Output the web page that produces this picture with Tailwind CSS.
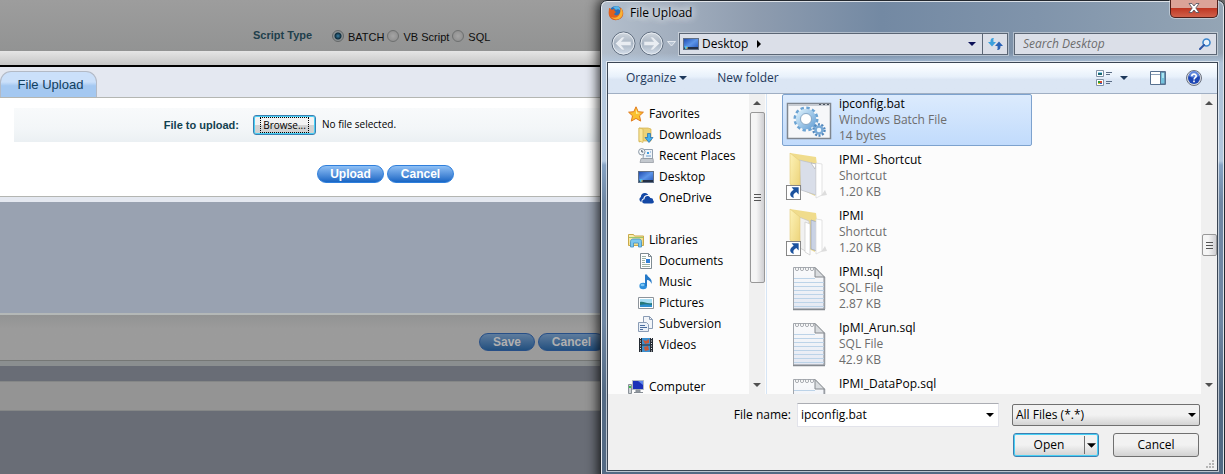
<!DOCTYPE html>
<html lang="en">
<head>
  <meta charset="UTF-8">
  <title>File Upload</title>
  <meta name="viewport" content="width=device-width, initial-scale=1.0">
  <script src="https://cdn.jsdelivr.net/npm/@tailwindcss/browser@4"></script>
</head>
<body class="relative min-h-screen overflow-hidden bg-[#696d76] font-['Liberation_Sans',Arial,sans-serif] text-xs text-black">

  <!-- shared icons -->
  <svg class="absolute size-0">
    <defs>
      <linearGradient id="gFolder" x1="0" y1="0" x2="1" y2="1">
        <stop offset="0" stop-color="#fdf3b8"/><stop offset="1" stop-color="#ecd277"/>
      </linearGradient>
      <linearGradient id="gPaper" x1="0" y1="0" x2="0" y2="1">
        <stop offset="0" stop-color="#fafbfc"/><stop offset="1" stop-color="#e4e8f2"/>
      </linearGradient>
      <linearGradient id="gBlue" x1="0" y1="0" x2="1" y2="1">
        <stop offset="0" stop-color="#1c48ae"/><stop offset=".5" stop-color="#5c95e8"/><stop offset="1" stop-color="#1d4fb8"/>
      </linearGradient>
      <linearGradient id="gGear" x1="0" y1="0" x2="1" y2="1">
        <stop offset="0" stop-color="#d5ecfa"/><stop offset="1" stop-color="#6fa6d8"/>
      </linearGradient>
      <linearGradient id="gCircle" x1="0" y1="0" x2="0" y2="1">
        <stop offset="0" stop-color="#d3d9e0"/><stop offset=".5" stop-color="#a9b5c3"/><stop offset="1" stop-color="#d5dfeb"/>
      </linearGradient>
    </defs>
    <symbol id="desktop" viewBox="0 0 16 14">
      <rect x=".5" y="1.5" width="15" height="11" fill="url(#gBlue)" stroke="#5f6f86"/>
      <rect x="1" y="10" width="14" height="2" fill="#222f45"/>
      <circle cx="3" cy="10.500" r="1.500" fill="#4cc3f0"/><circle cx="4" cy="11" r=".8" fill="#f4a52a"/>
    </symbol>
    <symbol id="down" viewBox="0 0 8 4"><path d="M0 0h8L4 4z" fill="currentColor"/></symbol>
    <symbol id="up" viewBox="0 0 8 4"><path d="M0 4h8L4 0z" fill="currentColor"/></symbol>
    <symbol id="notepad" viewBox="0 0 48 48">
      <path d="M8.500 3.500H30l9 9.500v32H8.500z" fill="url(#gPaper)" stroke="#a2a6ac"/>
      <path d="M8 45.500h32" stroke="#858a90" stroke-width="1.500"/>
      <path d="M39.500 13v32" stroke="#9a9ea4" stroke-width="1.500"/>
      <path d="M9 14.500h21M9 18.500h30M9 22.500h30M9 26.500h30M9 30.500h30M9 34.500h30M9 38.500h30M9 42.500h30" stroke="#bcd3e8"/>
      <path d="M30 3.500V13h9.500z" fill="#d9dcdf" stroke="#85898e"/>
      <g fill="#fff" stroke="#a9adb2"><circle cx="12" cy="5" r="1.600"/><circle cx="17" cy="5" r="1.600"/><circle cx="22" cy="5" r="1.600"/><circle cx="27" cy="5" r="1.600"/></g>
    </symbol>
    <symbol id="shortcut" viewBox="0 0 16 16">
      <rect x=".5" y=".5" width="15" height="15" fill="#fff" stroke="#808080"/>
      <path d="M6 2.500h7.500V10L11 7.500C8 9 7 11 8.500 13.500 4 13 2.500 8.500 8.200 5z" fill="#1b529e"/>
    </symbol>
  </svg>

  <!-- page behind the dialog -->
  <main class="flex flex-col">
    <div role="radiogroup" aria-label="Script Type" class="flex h-[51px] items-center bg-linear-to-b from-[#9d9d9d] to-[#929393] pt-5 pl-[253px] text-[11px] text-[#0d0d0d]">
      <span class="w-[79px] font-bold text-[#213f4c]">Script Type</span>
      <input id="batch" type="radio" name="type" checked class="size-3 appearance-none rounded-full border border-[#646768] bg-[#939494] checked:bg-[radial-gradient(circle,#3c7fa3_0,#0e2c3c_3px,#8b9092_4px)]">
      <label for="batch" class="pt-1 pr-[3px] pl-1">BATCH</label>
      <input id="vb" type="radio" name="type" class="size-3 appearance-none rounded-full border border-[#6e7070] bg-[radial-gradient(circle,#a5a5a5,#898989)]">
      <label for="vb" class="pt-1 pr-[3px] pl-1">VB Script</label>
      <input id="sql" type="radio" name="type" class="size-3 appearance-none rounded-full border border-[#6e7070] bg-[radial-gradient(circle,#a5a5a5,#898989)]">
      <label for="sql" class="pt-1 pl-1">SQL</label>
    </div>

    <section>
      <div class="h-4 border-b-2 border-black bg-linear-to-b from-[#e5e5e5] to-[#c6c6c6]"></div>
      <div class="flex h-[31px] items-end border-b border-[#b4b6b2] bg-[#e4e8f1]">
        <h2 class="flex h-[26px] w-[97px] items-center justify-center rounded-t-[11px] border border-b-0 border-[#b3bac6] bg-linear-to-b from-[#cbe0fa] from-40% to-[#a4c8f1] to-55% pl-1 text-[13px] text-[#12405f]">File Upload</h2>
      </div>
      <div class="h-[99px] border-b border-[#b4b6b2] bg-white pt-[10px]">
        <div class="ml-[14px] flex h-[34px] items-center bg-linear-to-b from-[#f8fafb] via-[#f3f6f8] via-60% to-[#ebf0f3]">
          <span class="w-[239px] pr-[14px] text-right text-[11px] font-bold text-[#12414f]">File to upload:</span>
          <button class="flex h-5 w-[63px] items-center justify-center rounded-[3px] border border-[#3c7fb1] bg-linear-to-b from-[#f2f2f2] from-50% to-[#d2d2d2] to-50% font-['Open_Sans',sans-serif] text-[10px] ring-1 ring-[#48d0f5] ring-inset">
            <span class="border border-dotted border-black px-0.5 leading-[14px]">Browse...</span>
          </button>
          <span class="ml-[6px] font-['Open_Sans',sans-serif] text-[10px]">No file selected.</span>
        </div>
        <div class="mt-[23px] ml-[317px] flex gap-[3px]">
          <button class="h-[18px] w-[67px] rounded-full border border-[#2f7fdc] bg-linear-to-b from-[#8fc0f5] to-[#1766c4] leading-4 font-bold text-white">Upload</button>
          <button class="h-[18px] w-[67px] rounded-full border border-[#2f7fdc] bg-linear-to-b from-[#8fc0f5] to-[#1766c4] leading-4 font-bold text-white">Cancel</button>
        </div>
      </div>
      <div class="h-[5px] bg-[#e4e8f0]"></div>
    </section>

    <div class="h-[111px] bg-[#99a2b1]"></div>
    <div class="flex h-12 items-center gap-[3px] border-t-2 border-b border-t-[#b4b8b7] border-b-[#757775] bg-linear-to-b from-[#929393] to-[#9b9b9b] to-30% pt-2 pl-[479px]">
      <button class="h-[18px] w-14 rounded-full border border-[#274f87] bg-linear-to-b from-[#5e7c9d] to-[#22507f] leading-4 font-bold text-[#b0b0b0]">Save</button>
      <button class="h-[18px] w-[67px] rounded-full border border-[#274f87] bg-linear-to-b from-[#5e7c9d] to-[#22507f] leading-4 font-bold text-[#b0b0b0]">Cancel</button>
    </div>
    <div class="h-[5px] bg-[#8b8f90]"></div>
    <div class="mt-[15px] h-[30px] border-y border-[#858787] bg-[#949494]"></div>
  </main>

  <!-- file picker window -->
  <div role="dialog" aria-label="File Upload" class="absolute top-0 right-0 left-[600px] rounded-t-[7px] border border-[#23282f] bg-[linear-gradient(90deg,#b4bfcc_0%,#8e9caf_25%,#7389a3_45%,#8094ab_70%,#94a5b5_100%)] px-[6px] pb-2 font-['Open_Sans',sans-serif] shadow-[0_0_12px_2px_rgba(0,0,0,.8),inset_0_0_0_1px_rgba(255,255,255,.7)]">
    <div class="absolute inset-x-px top-[52px] bottom-px bg-[linear-gradient(180deg,rgba(185,207,231,0)_0,rgba(185,207,231,.7)_10px,rgba(185,207,231,.8)_108px,#86a3c4_112px,#6f87a3_150px,#6f87a3_270px,#536a84_340px)]"></div>

    <div class="relative flex h-6 items-start justify-between">
      <div class="flex items-center gap-[6px] pt-1 pl-[1px]">
        <svg class="size-4" viewBox="0 0 16 16">
          <circle cx="8" cy="8" r="7" fill="#2b6fb8"/>
          <path d="M5 2c4-2 8 0 8 4-2-2-4-2-5-1z" fill="#55b5e8"/>
          <path d="M1 3c1 0 2 1 3 2 1-1 2-1 3-1C6 5 6 6 8 7L6 9c1 2 4 2 6-1 1-3 0-5-1-6 5 2 6 9 1 12C7 17 0 14 .7 7z" fill="#e2601b"/>
          <path d="M13 3c3 4 2 9-2 11-3 1-6 0-8-2 4 2 8 0 9-4 .6-2 .7-3 1-5z" fill="#f9b233"/>
        </svg>
        <span class="text-xs leading-4 [text-shadow:0_0_8px_#fff,0_0_8px_#fff]">File Upload</span>
      </div>
      <button aria-label="Close" class="-mt-px flex h-[18px] w-12 items-center justify-center rounded-b-[5px] border border-t-0 border-[#4d1f1b] bg-linear-to-b from-[#dba398] from-45% via-[#bf3723] via-50% to-[#d0604a] ring-1 ring-white/40">
        <svg class="mb-0.5 h-[10px] w-3" viewBox="0 0 12 10"><path d="M1 .5h3l2 2.500L8 .5h3L7.800 5 11 9.500H8L6 7 4 9.500H1L4.200 5z" fill="#fff" stroke="#4c4f5c" stroke-width=".8"/></svg>
      </button>
    </div>

    <div class="relative flex h-[37px] items-center pr-px pl-1">
      <button aria-label="Back" class="size-[25px]">
        <svg viewBox="0 0 25 25"><circle cx="12.500" cy="12.500" r="11.500" fill="url(#gCircle)" stroke="#5d6b7d"/><circle cx="12.500" cy="12.500" r="10.500" fill="none" stroke="#e6ebf1"/><path d="M4.500 12.500 11 6h3l-3.500 4.500H20v4h-9.500L14 19h-3z" fill="#e9edf2" stroke="#bac4d0" stroke-width=".6"/></svg>
      </button>
      <button aria-label="Forward" class="ml-[3px] size-[25px]">
        <svg viewBox="0 0 25 25"><circle cx="12.500" cy="12.500" r="11.500" fill="url(#gCircle)" stroke="#5d6b7d"/><circle cx="12.500" cy="12.500" r="10.500" fill="none" stroke="#e6ebf1"/><path d="M20.500 12.500 14 6h-3l3.500 4.500H5v4h9.500L11 19h3z" fill="#e9edf2" stroke="#bac4d0" stroke-width=".6"/></svg>
      </button>
      <svg class="mx-[3px] h-[6px] w-[9px]" viewBox="0 0 9 6"><path d="M.5.5h8l-4 4.500z" fill="#b9c5d3" stroke="#e3e8ee"/></svg>
      <div class="flex h-[22px] flex-1 items-center border border-[#5b6675] bg-[#dbdfe8] ring-1 ring-white/40">
        <svg class="mx-[3px] h-[14px] w-4"><use href="#desktop"/></svg>
        <span class="text-xs">Desktop</span>
        <svg class="ml-[9px] h-2 w-1" viewBox="0 0 4 8"><path d="M0 0v8l4-4z"/></svg>
        <svg class="mr-[6px] ml-auto h-1 w-2 text-[#0b1057]"><use href="#down"/></svg>
        <button aria-label="Refresh" class="flex h-full w-[25px] items-center justify-center border-l border-[#5b6675]">
          <svg class="h-3 w-[15px]" viewBox="0 0 15 12"><path d="M6 0C3 0 2.500 1.500 2.500 4H0l4 4.500L8 4H5.500C5.500 2 5 1 6 0z" fill="#3ba0dc"/><path d="M9 12c3 0 3.500-1.500 3.500-4H15l-4-4.500L7 8h2.500c0 2 .5 3-.5 4z" fill="#2a62b5"/></svg>
        </button>
      </div>
      <div class="ml-[6px] flex h-[22px] w-[203px] items-center border border-[#5b6675] bg-[#dbdfe8] ring-1 ring-white/40">
        <input type="text" aria-label="Search Desktop" placeholder="Search Desktop" class="min-w-0 flex-1 pl-2 text-xs italic outline-none placeholder:text-[#6d6d6d]">
        <svg class="mr-[5px] size-3" viewBox="0 0 12 12"><circle cx="7.500" cy="4.500" r="3.500" fill="#e8f1fa" stroke="#3c86cc" stroke-width="1.600"/><path d="m5 7-4 4" stroke="#2d55a5" stroke-width="2" stroke-linecap="round"/></svg>
      </div>
    </div>

    <div class="relative border border-[#3b4654] bg-[#f0f0f0] ring-1 ring-white/60">
      <div class="flex h-[31px] items-center border-b border-[#a0afc3] bg-linear-to-b from-[#fafdff] from-10% via-[#e8f1fb] via-45% to-[#dbe6f4] to-55% pr-[15px] pl-[18px] text-[#1e395b]">
        <button class="flex items-center gap-[3px]">Organize <svg class="h-1 w-2"><use href="#down"/></svg></button>
        <button class="ml-[30px]">New folder</button>
        <button aria-label="Change your view" class="ml-auto flex items-center gap-2">
          <svg class="size-4" viewBox="0 0 16 16"><path d="M.5.5h7v6h-7zM.5 9.500h7v6h-7z" fill="#fff" stroke="#8191a5"/><path d="M2 2h4v1H2z" fill="#8fd0f0"/><path d="M2 3h4v2H2z" fill="#1c6a72"/><path d="M2 11h2v2H2z" fill="#2b9a3a"/><path d="M4 11h2v2H4z" fill="#d24a30"/><path d="M2 13h2v1H2z" fill="#e8b820"/><path d="M4 13h2v1H4z" fill="#2a5ec0"/><path d="M10 2.500h6M10 4.500h4M10 11.500h6M10 13.500h4" stroke="#5b6d86"/></svg>
          <svg class="h-1 w-2"><use href="#down"/></svg>
        </button>
        <button aria-label="Preview pane" class="ml-[22px]">
          <svg class="size-4" viewBox="0 0 16 16"><path d="M.5 1.500h15v13H.5z" fill="#fff" stroke="#56708f"/><path d="M1 4.500h9" stroke="#8ba0b8"/><path d="M10.500 2h4.500v12h-4.500z" fill="#74c2dd" stroke="#56708f"/><path d="M12 3h2v5h-2z" fill="#a9e4f2"/></svg>
        </button>
        <button aria-label="Help" class="ml-5">
          <svg class="size-4" viewBox="0 0 16 16"><circle cx="8" cy="8" r="7.500" fill="#d6d9df" stroke="#6b7280"/><circle cx="8" cy="8" r="6" fill="#1d46b4"/><path d="M3 6a5 5 0 0 1 10 0c-3 2-7 2-10 0z" fill="#5f86dc"/><path d="M5.800 6.200C5.800 3.400 10.300 3.500 10.200 6c0 1.600-2.100 1.600-2.100 3.400M8 10.600v1.700" fill="none" stroke="#fff" stroke-width="1.600"/></svg>
        </button>
      </div>

      <div class="flex h-[300px] bg-[#fcfcfc]">
        <!-- navigation pane -->
        <nav class="flex w-[159px] overflow-hidden border-r border-[#d6e5f5]">
          <ul class="w-[141px] shrink-0 pt-[9px] leading-[21px]">
            <li><a href="#" class="flex items-center gap-[5px] pl-5">
              <svg class="size-4" viewBox="0 0 16 16"><path d="m8 .8 2.200 4.900 5.200.5-3.900 3.600 1.200 5.300L8 12.400l-4.700 2.700 1.200-5.300L.6 6.200l5.200-.5z" fill="#fbc02f" stroke="#e07a1c"/><path d="m8 3 1.200 3.500 3 .5-4.200 1z" fill="#fff0a0"/></svg>Favorites</a></li>
            <li><a href="#" class="flex items-center gap-[5px] pl-[30px]">
              <svg class="size-4" viewBox="0 0 16 16"><path d="M1 1h9l3 1v12H4L1 15z" fill="#ecd277" stroke="#d2b04c" stroke-width=".7"/><path d="M1 1l4 1v13.500L1 14z" fill="#f9e69a" stroke="#cfae4a" stroke-width=".6"/><path d="M9.500 6.500h3v4H15l-4 5-4-5h2.500z" fill="#44b0ee" stroke="#1c6bb0" stroke-width=".7"/></svg>Downloads</a></li>
            <li><a href="#" class="flex items-center gap-[5px] pl-[30px]">
              <svg class="size-4" viewBox="0 0 16 16"><path d="M6 1.500h8.500v9H5z" fill="#eef3f8" stroke="#93a0ae"/><path d="M3 10.500h12l.5 4H2z" fill="#c3c8ce" stroke="#8d949c" stroke-width=".7"/><path d="M9 4h2v2H9z" fill="#3d9be0"/><path d="M8 8h5M12 4h1" stroke="#6f9cc8"/><circle cx="3.800" cy="3.800" r="3.200" fill="#f6f9fb" stroke="#8a97a5"/><path d="M3.800 2v2h1.500" fill="none" stroke="#456"/></svg>Recent Places</a></li>
            <li><a href="#" class="flex items-center gap-[5px] pl-[30px]">
              <svg class="h-[14px] w-4"><use href="#desktop"/></svg>Desktop</a></li>
            <li><a href="#" class="flex items-center gap-[5px] pl-[30px]">
              <svg class="size-4" viewBox="0 0 16 16"><path d="M3.500 12A2.700 2.700 0 0 1 2.800 7C3 4 5.500 2.500 8 3.300c1.200.4 1.800 1 2.300 1.700C7.500 4.700 5.500 6 5.500 8.500 3.800 9 3.300 10.300 3.500 12z" fill="#1348a5"/><path d="M6.500 13.500c-3 0-3-4 0-4.200C6.500 5.500 11 5 12.300 8c2.200-.2 3 1.300 2.700 2.300 1.600 1 .8 3.200-1 3.200z" fill="#1348a5"/></svg>OneDrive</a></li>
            <li class="mt-[21px]"><a href="#" class="flex items-center gap-[5px] pl-5">
              <svg class="size-4" viewBox="0 0 16 16"><path d="M.5 2.500h5l1 1.500h9v9.500H.5z" fill="url(#gFolder)" stroke="#c9a94a"/><path d="M1 5.500h14" stroke="#9cc76b"/><path d="M2.500 15V9.500C2.500 7.800 4 7 5 7h6c1.500 0 2.500 1 2.500 2.500V15h-3v-4h-5v4z" fill="#7cc7ef" stroke="#3f8fc4" stroke-width=".8"/></svg>Libraries</a></li>
            <li><a href="#" class="flex items-center gap-[5px] pl-[30px]">
              <svg class="size-4" viewBox="0 0 16 16"><path d="M2.500.5h8l3 3v12h-11z" fill="#fff" stroke="#7f8b92"/><path d="M10.500.5v3h3" fill="none" stroke="#7f8b92"/><path d="M4 3.500h4M4 5.500h4M4 7.500h3M4 9.500h3M4 11.500h8M4 13.500h8" stroke="#9bb1a5"/><path d="M8 6h4v4H8z" fill="#2f7fd6"/></svg>Documents</a></li>
            <li><a href="#" class="flex items-center gap-[5px] pl-[30px]">
              <svg class="size-4" viewBox="0 0 16 16"><ellipse cx="5.200" cy="12" rx="3.800" ry="3.200" fill="#2e8fdc"/><path d="M7 12V.5h2c.5 3 6 4 4.500 9.500-.5-2-2-4-4.500-4V12z" fill="#2579c8"/><ellipse cx="4.500" cy="11" rx="2" ry="1.200" fill="#7cc6f4"/></svg>Music</a></li>
            <li><a href="#" class="flex items-center gap-[5px] pl-[30px]">
              <svg class="size-4" viewBox="0 0 16 16"><path d="M.5 2.500h15v11H.5z" fill="#fff" stroke="#8d949b"/><path d="M2 4h12v8H2z" fill="#a9def4"/><path d="M2 7c4-1 6 2 12 1v4H2z" fill="#27797a"/><path d="M2 10c4-1 8-1 12 0v2H2z" fill="#2f8fd0"/></svg>Pictures</a></li>
            <li><a href="#" class="flex items-center gap-[5px] pl-[30px]">
              <svg class="size-4" viewBox="0 0 16 16"><path d="M5.500.5h6l3 3v9h-9z" fill="#f2f5f9" stroke="#8a9cb5"/><path d="M11.500.5v3h3" fill="none" stroke="#8a9cb5"/><path d="M.5 6.500h8l2 2v7H.5z" fill="#e9f0f8" stroke="#8a9cb5"/><path d="M2 9.500h5M2 11.500h7M2 13.500h3" stroke="#4a6d9f"/></svg>Subversion</a></li>
            <li><a href="#" class="flex items-center gap-[5px] pl-[30px]">
              <svg class="size-4" viewBox="0 0 16 16"><path d="M1 1h14v14H1z" fill="#252b33"/><path d="M4 1h8v6.500H4zM4 8.500h8V15H4z" fill="#3c90cf"/><path d="M5 3l3 1 3-2v4L7 7zM6 10l4-1 1 4-4 1z" fill="#c9593a"/><path d="M2.500 1v14M13.500 1v14" stroke="#e6e9ec" stroke-dasharray="1 1.500"/></svg>Videos</a></li>
            <li class="mt-[21px]"><a href="#" class="flex items-center gap-[5px] pl-5">
              <svg class="size-4" viewBox="0 0 16 16"><path d="M4.500 1.500h11v9h-11z" fill="#1a30b8" stroke="#b3bac2"/><path d="M10 2h5v4z" fill="#5d86ec"/><path d="M8 11h4v2H8zM6 13.500h9" fill="#9aa1a8" stroke="#858c94"/><path d="M.5 5.500h3v9h-3z" fill="#cdd2d6" stroke="#8b9299"/><path d="M1 7h2v2H1z" fill="#37c14a"/></svg>Computer</a></li>
          </ul>
          <div class="flex w-4 flex-col items-center bg-[#f0f0f0] pt-[7px] pb-[7px]">
            <svg class="h-1 w-2 text-[#505050]"><use href="#up"/></svg>
            <div class="mt-[7px] flex h-[171px] w-[15px] flex-col items-center justify-center gap-0.5 rounded-[2px] border border-[#989898] bg-linear-to-r from-[#f5f5f5] from-40% to-[#cfcfd2]">
              <i class="h-px w-[7px] bg-[#555]"></i><i class="h-px w-[7px] bg-[#555]"></i><i class="h-px w-[7px] bg-[#555]"></i>
            </div>
            <svg class="mt-auto h-1 w-2 text-[#505050]"><use href="#down"/></svg>
          </div>
        </nav>

        <!-- file list -->
        <ul class="flex flex-1 flex-col gap-1 overflow-hidden pl-[15px] leading-4 text-[#6d6d6d]">
          <li class="flex w-[250px] shrink-0 gap-[6px] rounded-[2px] border border-[#7da2ce] bg-linear-to-b from-[#dcebfd] to-[#c1dbfc] py-px pl-[2px]">
            <svg class="size-12" viewBox="0 0 48 48">
              <path d="M2.500 7.500h43v35h-43z" fill="#f6f7f9" stroke="#7f868f" stroke-width="1.500"/>
              <path d="M3 9h42" stroke="#c6cbd2" stroke-width="2"/><path d="M34 8.500h2m2 0h2m2 0h2" stroke="#4d5763"/>
              <circle cx="21" cy="23" r="11" fill="none" stroke="#6ba3d3" stroke-width="3" stroke-dasharray="3.300 2.460"/>
              <circle cx="21" cy="23" r="7.800" fill="none" stroke="url(#gGear)" stroke-width="5"/>
              <circle cx="21" cy="23" r="5.500" fill="#fff" stroke="#7597b8" stroke-width=".8"/>
              <circle cx="34" cy="34" r="5.500" fill="none" stroke="#5288bd" stroke-width="2.500" stroke-dasharray="2 1.450"/>
              <circle cx="34" cy="34" r="3.500" fill="#eef6fc" stroke="#78a9d6" stroke-width="2.500"/>
            </svg>
            <p><span class="text-black">ipconfig.bat</span><br>Windows Batch File<br>14 bytes</p>
          </li>
          <li class="flex w-[250px] shrink-0 gap-[6px] border border-transparent py-px pl-[2px]">
            <svg class="size-12" viewBox="0 0 48 48">
              <path d="M36 44l6-1-2-5z" fill="#ddd"/>
              <path d="M5 1l26 4 1 8-2 31L5 32z" fill="#f0dc8c"/>
              <path d="M14 8l17 4v31l-15-5z" fill="#d9dee9" stroke="#b9bfcb" stroke-width=".7"/>
              <path d="M26 11l4 6 1-5z" fill="#fff" stroke="#aaa" stroke-width=".6"/>
              <path d="M31 11l6 1v31l-6 3z" fill="#fff" stroke="#d7d7d7" stroke-width=".7"/>
              <path d="M5 1l10 8v29L5 32z" fill="url(#gFolder)" stroke="#e3cb7b" stroke-width=".6"/>
              <use href="#shortcut" x="1" y="33" width="15" height="15"/>
            </svg>
            <p><span class="text-black">IPMI - Shortcut</span><br>Shortcut<br>1.20 KB</p>
          </li>
          <li class="flex w-[250px] shrink-0 gap-[6px] border border-transparent py-px pl-[2px]">
            <svg class="size-12" viewBox="0 0 48 48">
              <path d="M36 44l6-1-2-5z" fill="#ddd"/>
              <path d="M5 1l26 4 1 8-2 31L5 32z" fill="#f0dc8c"/>
              <path d="M14 9l10 4v32l-9-5z" fill="#f1f1f1" stroke="#c4c4c4" stroke-width=".7"/>
              <path d="M20 14l5 2v31l-5-3z" fill="#fff" stroke="#c9c9c9" stroke-width=".7"/>
              <path d="M26 12l6 2v29l-6-2z" fill="#c9d2e4" stroke="#9ba3b1" stroke-width=".7"/>
              <path d="M31 11l6 1v31l-6 3z" fill="#fff" stroke="#d7d7d7" stroke-width=".7"/>
              <path d="M5 1l10 8v29L5 32z" fill="url(#gFolder)" stroke="#e3cb7b" stroke-width=".6"/>
              <use href="#shortcut" x="1" y="33" width="15" height="15"/>
            </svg>
            <p><span class="text-black">IPMI</span><br>Shortcut<br>1.20 KB</p>
          </li>
          <li class="flex w-[250px] shrink-0 gap-[6px] border border-transparent py-px pl-[2px]">
            <svg class="size-12"><use href="#notepad"/></svg>
            <p><span class="text-black">IPMI.sql</span><br>SQL File<br>2.87 KB</p>
          </li>
          <li class="flex w-[250px] shrink-0 gap-[6px] border border-transparent py-px pl-[2px]">
            <svg class="size-12"><use href="#notepad"/></svg>
            <p><span class="text-black">IpMI_Arun.sql</span><br>SQL File<br>42.9 KB</p>
          </li>
          <li class="flex w-[250px] shrink-0 gap-[6px] border border-transparent py-px pl-[2px]">
            <svg class="size-12"><use href="#notepad"/></svg>
            <p><span class="text-black">IPMI_DataPop.sql</span></p>
          </li>
        </ul>
        <div class="flex w-4 flex-col items-center bg-[#f0f0f0] pt-[7px] pb-[7px]">
          <svg class="h-1 w-2 text-[#505050]"><use href="#up"/></svg>
          <div class="mt-[129px] flex h-[22px] w-[15px] flex-col items-center justify-center gap-0.5 rounded-[2px] border border-[#989898] bg-linear-to-r from-[#f5f5f5] from-40% to-[#cfcfd2]">
            <i class="h-px w-[7px] bg-[#555]"></i><i class="h-px w-[7px] bg-[#555]"></i><i class="h-px w-[7px] bg-[#555]"></i>
          </div>
          <svg class="mt-auto h-1 w-2 text-[#505050]"><use href="#down"/></svg>
        </div>
      </div>

      <!-- file name and buttons -->
      <div class="flex h-[76px] flex-col items-end gap-[6px] pt-[9px] pr-[17px]">
        <div class="flex items-center">
          <label for="filename" class="mr-[6px]">File name:</label>
          <div class="flex h-6 w-[202px] items-center border border-[#e2e3ea] border-t-[#abadb3] bg-white pr-1">
            <input id="filename" type="text" value="ipconfig.bat" class="min-w-0 flex-1 pl-[3px] outline-none">
            <button aria-label="Show file names"><svg class="h-1 w-2"><use href="#down"/></svg></button>
          </div>
          <div class="relative ml-[13px]">
            <select aria-label="File type" class="h-[22px] w-[188px] appearance-none rounded-[2px] border border-[#707070] bg-linear-to-b from-[#f2f2f2] from-50% to-[#d3d3d3] pl-[3px] leading-5">
              <option>All Files (*.*)</option>
            </select>
            <svg class="pointer-events-none absolute top-[9px] right-1 h-1 w-2"><use href="#down"/></svg>
          </div>
        </div>
        <div class="flex gap-[14px] pr-px">
          <div class="flex h-6 w-[86px] rounded-[3px] border border-[#3c7fb1] bg-linear-to-b from-[#f2f2f2] from-50% to-[#d2d2d2] ring-1 ring-[#48d0f5] ring-inset">
            <button class="flex-1">Open</button>
            <button aria-label="Open options" class="my-0.5 flex w-[14px] items-center border-l border-[#707070] pl-[2px]"><svg class="h-[5px] w-[9px]"><use href="#down"/></svg></button>
          </div>
          <button class="h-6 w-[86px] rounded-[3px] border border-[#707070] bg-linear-to-b from-[#f2f2f2] from-50% to-[#d2d2d2]">Cancel</button>
        </div>
      </div>
      <svg class="absolute right-[3px] bottom-[2px] size-2 text-[#b5b5b5]" viewBox="0 0 8 8"><path d="M6 0h2v2H6zM3 3h2v2H3zM6 3h2v2H6zM0 6h2v2H0zM3 6h2v2H3zM6 6h2v2H6z" fill="currentColor"/></svg>
    </div>
  </div>

</body>
</html>
